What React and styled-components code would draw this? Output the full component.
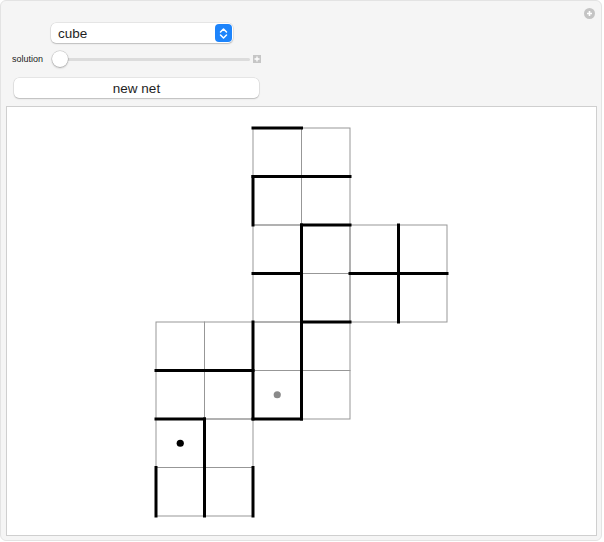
import styled, { createGlobalStyle } from 'styled-components'

const GlobalStyle = createGlobalStyle`
    body {
        margin: 0;
        background: #ffffff;
        font-family: "Liberation Sans", Arial, sans-serif;
    }
`

const CELL = 48.5
const OX = 149
const OY = 21

// cells of the net, [col, row]
const cells = [
    [2, 0], [3, 0], [2, 1], [3, 1],
    [2, 2], [3, 2], [4, 2], [5, 2],
    [2, 3], [3, 3], [4, 3], [5, 3],
    [0, 4], [1, 4], [2, 4], [3, 4],
    [0, 5], [1, 5], [2, 5], [3, 5],
    [0, 6], [1, 6], [0, 7], [1, 7],
]

// cut lines, [x1, y1, x2, y2] in grid units
const cuts = [
    [2, 0, 3, 0],
    [2, 1, 4, 1],
    [2, 1, 2, 2],
    [3, 2, 4, 2],
    [3, 2, 3, 6],
    [2, 3, 3, 3],
    [4, 3, 6, 3],
    [5, 2, 5, 4],
    [3, 4, 4, 4],
    [2, 4, 2, 6],
    [2, 6, 3, 6],
    [0, 5, 2, 5],
    [0, 6, 1, 6],
    [1, 6, 1, 8],
    [0, 7, 0, 8],
    [2, 7, 2, 8],
]

const gx = c => OX + c * CELL
const gy = r => OY + r * CELL

const Panel = styled.div`
    position: relative;
    width: 602px;
    height: 541px;
    box-sizing: border-box;
    background: #f5f5f5;
    border: 1px solid #e3e3e3;
    border-radius: 6px;
    display: flex;
    flex-direction: column;
`

const CornerButton = styled.div`
    position: absolute;
    top: 7px;
    right: 6px;
    width: 11px;
    height: 11px;
    border-radius: 50%;
    background: #c4c4c4;
    display: flex;
    align-items: center;
    justify-content: center;
`

const Controls = styled.div`
    display: flex;
    flex-direction: column;
    padding-top: 22px;
`

const Popup = styled.div`
    margin-left: 50px;
    width: 182px;
    height: 20px;
    box-sizing: border-box;
    background: #ffffff;
    border-radius: 5px;
    box-shadow: 0 0 0 0.5px rgba(0, 0, 0, 0.12), 0 1px 1.5px rgba(0, 0, 0, 0.18);
    display: flex;
    align-items: center;
    justify-content: space-between;
    padding: 0 1px 0 7px;
    font-size: 13.5px;
    color: #1e1e1e;
`

const Stepper = styled.div`
    width: 17px;
    height: 18px;
    border-radius: 4px;
    background: #1d84fb;
    display: flex;
    align-items: center;
    justify-content: center;
`

const SliderRow = styled.div`
    display: flex;
    align-items: center;
    height: 16px;
    margin-top: 8px;
    padding-left: 11px;
`

const Label = styled.span`
    font-size: 9px;
    color: #222;
    width: 40px;
`

const Track = styled.div`
    position: relative;
    width: 198px;
    height: 3px;
    border-radius: 2px;
    background: #dcdcdc;
    display: flex;
    align-items: center;
`

const Thumb = styled.div`
    position: absolute;
    left: 0;
    top: -7px;
    width: 16px;
    height: 16px;
    border-radius: 50%;
    background: #ffffff;
    box-shadow: 0 0 0 0.5px rgba(0, 0, 0, 0.2), 0 1px 2px rgba(0, 0, 0, 0.25);
`

const PlusBox = styled.div`
    margin-left: 3px;
    width: 8px;
    height: 8px;
    background: #c6c6c6;
    display: flex;
    align-items: center;
    justify-content: center;
`

const Button = styled.div`
    margin: 11px 0 0 13px;
    width: 245px;
    height: 20px;
    background: #ffffff;
    border-radius: 5px;
    box-shadow: 0 0 0 0.5px rgba(0, 0, 0, 0.12), 0 1px 1.5px rgba(0, 0, 0, 0.18);
    display: flex;
    align-items: center;
    justify-content: center;
    font-size: 13.5px;
    color: #1e1e1e;
`

const Frame = styled.div`
    margin: 8px 0 0 5px;
    width: 591px;
    height: 430px;
    box-sizing: border-box;
    background: #ffffff;
    border: 1px solid #cfcfcf;
`

function Net() {
    return (
        <svg width="589" height="428" viewBox="0 0 589 428">
            {cells.map(([c, r]) => (
                <rect key={`${c}-${r}`} x={gx(c)} y={gy(r)} width={CELL} height={CELL}
                    fill="none" stroke="#979797" strokeWidth="1" />
            ))}
            {cuts.map(([x1, y1, x2, y2], i) => (
                <line key={i} x1={gx(x1)} y1={gy(y1)} x2={gx(x2)} y2={gy(y2)}
                    stroke="#000" strokeWidth="3" strokeLinecap="square" />
            ))}
            <circle cx={gx(0.5)} cy={gy(6.5)} r="3.6" fill="#000" />
            <circle cx={gx(2.5)} cy={gy(5.5)} r="3.6" fill="#8a8a8a" />
        </svg>
    )
}

export default function App() {
    return (
        <>
            <GlobalStyle />
            <Panel>
                <CornerButton>
                    <svg width="7" height="7" viewBox="0 0 7 7">
                        <path d="M3.5 1v5M1 3.5h5" stroke="#fff" strokeWidth="1.6" />
                    </svg>
                </CornerButton>
                <Controls>
                    <Popup>
                        <span>cube</span>
                        <Stepper>
                            <svg width="9" height="13" viewBox="0 0 9 13">
                                <path d="M1.5 5L4.5 2L7.5 5M1.5 8L4.5 11L7.5 8" fill="none" stroke="#fff"
                                    strokeWidth="1.5" strokeLinecap="round" strokeLinejoin="round" />
                            </svg>
                        </Stepper>
                    </Popup>
                    <SliderRow>
                        <Label>solution</Label>
                        <Track>
                            <Thumb />
                        </Track>
                        <PlusBox>
                            <svg width="6" height="6" viewBox="0 0 6 6">
                                <path d="M3 0.5v5M0.5 3h5" stroke="#fff" strokeWidth="1.3" />
                            </svg>
                        </PlusBox>
                    </SliderRow>
                    <Button>new net</Button>
                </Controls>
                <Frame>
                    <Net />
                </Frame>
            </Panel>
        </>
    )
}
